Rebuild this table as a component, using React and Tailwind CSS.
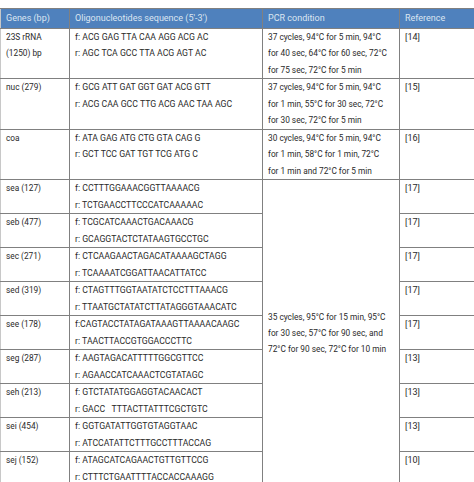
const rows = [
  { gene: ['23S rRNA', '(1250) bp'], seq: ['f: ACG GAG TTA CAA AGG ACG AC', 'r: AGC TCA GCC TTA ACG AGT AC'], pcr: ['37 cycles, 94°C for 5 min, 94°C', 'for 40 sec, 64°C for 60 sec, 72°C', 'for 75 sec, 72°C for 5 min'], ref: '[14]' },
  { gene: ['nuc (279)'], seq: ['f: GCG ATT GAT GGT GAT ACG GTT', 'r: ACG CAA GCC TTG ACG AAC TAA AGC'], pcr: ['37 cycles, 94°C for 5 min, 94°C', 'for 1 min, 55°C for 30 sec, 72°C', 'for 30 sec, 72°C for 5 min'], ref: '[15]' },
  { gene: ['coa'], seq: ['f: ATA GAG ATG CTG GTA CAG G', 'r: GCT TCC GAT TGT TCG ATG C'], pcr: ['30 cycles, 94°C for 5 min, 94°C', 'for 1 min, 58°C for 1 min, 72°C', 'for 1 min and 72°C for 5 min'], ref: '[16]' },
  { gene: ['sea (127)'], seq: ['f: CCTTTGGAAACGGTTAAAACG', 'r: TCTGAACCTTCCCATCAAAAAC'], ref: '[17]' },
  { gene: ['seb (477)'], seq: ['f: TCGCATCAAACTGACAAACG', 'r: GCAGGTACTCTATAAGTGCCTGC'], ref: '[17]' },
  { gene: ['sec (271)'], seq: ['f: CTCAAGAACTAGACATAAAAGCTAGG', 'r: TCAAAATCGGATTAACATTATCC'], ref: '[17]' },
  { gene: ['sed (319)'], seq: ['f: CTAGTTTGGTAATATCTCCTTTAAACG', 'r: TTAATGCTATATCTTATAGGGTAAACATC'], ref: '[17]' },
  { gene: ['see (178)'], seq: ['f:CAGTACCTATAGATAAAGTTAAAACAAGC', 'r: TAACTTACCGTGGACCCTTC'], ref: '[17]' },
  { gene: ['seg (287)'], seq: ['f: AAGTAGACATTTTTGGCGTTCC', 'r: AGAACCATCAAACTCGTATAGC'], ref: '[13]' },
  { gene: ['seh (213)'], seq: ['f: GTCTATATGGAGGTACAACACT', 'r: GACC\u00a0\u00a0\u00a0TTTACTTATTTCGCTGTC'], ref: '[13]' },
  { gene: ['sei (454)'], seq: ['f: GGTGATATTGGTGTAGGTAAC', 'r: ATCCATATTCTTTGCCTTTACCAG'], ref: '[13]' },
  { gene: ['sej (152)'], seq: ['f: ATAGCATCAGAACTGTTGTTCCG', 'r: CTTTCTGAATTTTACCACCAAAGG'], ref: '[10]' },
];

const mergedPcr = ['35 cycles, 95°C for 15 min, 95°C', 'for 30 sec, 57°C for 90 sec, and', '72°C for 90 sec, 72°C for 10 min'];

const Lines = ({ items }) => items.map((t, i) => <div key={i} className="whitespace-nowrap">{t}</div>);

const cell = 'border border-[#808080] pl-[5px] pr-1 align-top';

export default function App() {
  return (
    <div className="w-[474px] h-[482px] overflow-hidden bg-white text-[#2a2a2a] text-[8.5px] leading-[16.5px]" style={{ fontFamily: 'Roboto, "Noto Sans", sans-serif' }}>
      {/* caption, only the descenders show */}
      <div className="h-[8px] overflow-hidden text-[9px]">
        <div className="-mt-[14px] pl-[6px] whitespace-nowrap text-[#555]">Table 1. Oligonucleotide primers and PCR conditions used in this study</div>
      </div>
      <table className="table-fixed border-collapse w-[474px]">
        <colgroup>
          <col className="w-[69px]" />
          <col className="w-[193px]" />
          <col className="w-[137px]" />
          <col className="w-[75px]" />
        </colgroup>
        <thead>
          <tr className="bg-[#4f81bd] text-[#dce6f2] text-[9px]">
            <th className={`${cell} font-normal text-left py-px border-l-[#c8c8c8]`}>Genes (bp)</th>
            <th className={`${cell} font-normal text-left py-px`}>Oligonucleotides sequence (5'-3')</th>
            <th className={`${cell} font-normal text-left py-px`}>PCR condition</th>
            <th className={`${cell} font-normal text-left py-px`}>Reference</th>
          </tr>
        </thead>
        <tbody>
          {rows.map((r, i) => (
            <tr key={i}>
              <td className={`${cell} border-l-[#c8c8c8] text-[8.3px]`}><Lines items={r.gene} /></td>
              <td className={`${cell} text-[8.7px]`}><Lines items={r.seq} /></td>
              {r.pcr && <td className={`${cell} text-[8.3px]`}><Lines items={r.pcr} /></td>}
              {i === 3 && (
                <td rowSpan={9} className="border border-[#808080] pl-[5px] pr-1 align-middle text-[8.3px] leading-[16px]">
                  <Lines items={mergedPcr} />
                </td>
              )}
              <td className={`${cell} text-[9px]`}>{r.ref}</td>
            </tr>
          ))}
        </tbody>
      </table>
    </div>
  );
}
